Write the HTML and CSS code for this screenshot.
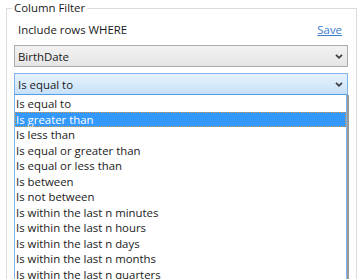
FILE: index.html
```html
<!DOCTYPE html>
<html>
<head>
<meta charset="utf-8">
<link rel="stylesheet" href="styles.css">
</head>
<body>
<fieldset class="group">
  <legend class="group-title">Column Filter</legend>
  <div class="header">
    <span class="label">Include rows WHERE</span>
    <a class="save" href="#">Save</a>
  </div>
  <div class="combo combo-gray">
    <span class="combo-text">BirthDate</span>
    <svg class="chev" width="8" height="5" viewBox="0 0 8 5"><polyline points="1,0.8 4,3.8 7,0.8" fill="none" stroke="#3c3c3c" stroke-width="1.7"/></svg>
  </div>
  <div class="combo combo-blue">
    <span class="combo-text">Is equal to</span>
    <svg class="chev" width="8" height="5" viewBox="0 0 8 5"><polyline points="1,0.8 4,3.8 7,0.8" fill="none" stroke="#3c3c3c" stroke-width="1.7"/></svg>
  </div>
  <ul class="list">
    <li>Is equal to</li>
    <li class="sel">Is greater than</li>
    <li>Is less than</li>
    <li>Is equal or greater than</li>
    <li>Is equal or less than</li>
    <li>Is between</li>
    <li>Is not between</li>
    <li>Is within the last n minutes</li>
    <li>Is within the last n hours</li>
    <li>Is within the last n days</li>
    <li>Is within the last n months</li>
    <li>Is within the last n quarters</li>
  </ul>
</fieldset>
</body>
</html>
```

FILE: styles.css
```css
html, body {
  margin: 0;
  padding: 0;
  background: #ffffff;
  overflow: hidden;
}
body {
  font-family: "Open Sans", "Noto Sans", sans-serif;
  font-size: 11.4px;
  color: #1a1a1a;
}
.group {
  margin: 0 4px 0 6px;
  padding: 0 8px 20px 7px;
  border: 1px solid #dcdcdc;
  min-width: 0;
}
.group-title {
  margin-left: -2px;
  padding: 0 2px;
  line-height: 16px;
  color: #1a1a1a;
}
.header {
  display: flex;
  justify-content: space-between;
  align-items: center;
  height: 18px;
  margin-top: 4px;
  padding: 0 6px 0 4px;
}
.save {
  color: #3b7ccb;
  text-decoration: underline;
}
.combo {
  display: flex;
  align-items: center;
  justify-content: space-between;
  height: 20px;
  padding: 0 4px 0 3px;
}
.combo-gray {
  margin-top: 7px;
  border: 1px solid #acacac;
  background: linear-gradient(#f2f2f2, #e5e5e5);
}
.combo-blue {
  margin-top: 6px;
  border: 1px solid #7eb4ea;
  border-bottom-color: #569de5;
  background: linear-gradient(#e6f1fc 0%, #d8eafb 50%, #c6e0fa 100%);
}
.chev {
  display: block;
}
.list {
  list-style: none;
  margin: 0 1px 0 0;
  padding: 1px 0 0 0;
  border-left: 1px solid #7eb4ea;
  border-right: 1px solid #7eb4ea;
  box-shadow: 2px 0 0 #9a9a9a;
  height: 200px;
}
.list li {
  height: 15.5px;
  line-height: 15.5px;
  padding-left: 1px;
  white-space: nowrap;
}
.list li.sel {
  background: #3399ff;
  color: #ffffff;
  outline: 1px dotted #d29a4a;
  outline-offset: -1px;
}
```
